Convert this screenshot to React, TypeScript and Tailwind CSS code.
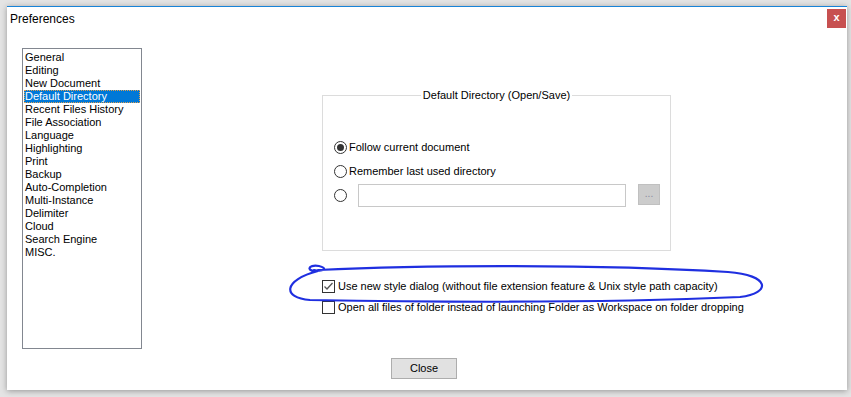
import React from 'react';

const pages = [
  'General',
  'Editing',
  'New Document',
  'Default Directory',
  'Recent Files History',
  'File Association',
  'Language',
  'Highlighting',
  'Print',
  'Backup',
  'Auto-Completion',
  'Multi-Instance',
  'Delimiter',
  'Cloud',
  'Search Engine',
  'MISC.',
];

function Radio({ checked }: { checked?: boolean }) {
  return (
    <span className="w-[13px] h-[13px] rounded-full border border-[#333] bg-white flex items-center justify-center shrink-0">
      {checked && <span className="w-[7px] h-[7px] rounded-full bg-[#333]" />}
    </span>
  );
}

function Checkbox({ checked }: { checked?: boolean }) {
  return (
    <span className="w-[13px] h-[13px] border border-[#333] bg-white flex items-center justify-center shrink-0">
      {checked && (
        <svg width="11" height="11" viewBox="0 0 11 11">
          <path d="M1.5 5.5 L4 8 L9.5 2" fill="none" stroke="#555" strokeWidth="1.3" />
        </svg>
      )}
    </span>
  );
}

export default function App() {
  return (
    <div
      className="relative w-[851px] h-[397px] overflow-hidden bg-[#e4e4e4] pl-[7px] pt-[6px] text-[11px] text-black"
      style={{ fontFamily: '"Liberation Sans", Arial, sans-serif' }}
    >
      <div className="w-[840px] h-[384px] bg-white border-t border-[#1883d7] shadow-[0_1px_6px_rgba(0,0,0,0.35)] flex flex-col">
        {/* title bar */}
        <div className="relative h-[34px] shrink-0">
          <div className="pl-[3px] pt-[5px] text-[12px] leading-[15px]">Preferences</div>
          <div className="absolute right-[1px] top-[2px] w-[19px] h-[19px] bg-[#c75050] text-white text-[11px] font-bold leading-[17px] text-center">
            x
          </div>
        </div>

        <div className="flex">
          {/* page list */}
          <div className="ml-[15px] mt-[7px] w-[120px] h-[301px] border border-[#828790] pt-[2px]">
            {pages.map((p) => (
              <div
                key={p}
                className={
                  p === 'Default Directory'
                    ? 'mx-[1px] pl-[1px] h-[13px] leading-[13px] bg-[#0078d7] text-white outline outline-dotted outline-[#e0a050] -outline-offset-1'
                    : 'mx-[1px] pl-[1px] h-[13px] leading-[13px]'
                }
              >
                {p}
              </div>
            ))}
          </div>

          {/* right pane */}
          <div className="ml-[180px] flex flex-col">
            <div className="relative mt-[54px] w-[349px] h-[156px] border border-[#dcdcdc] pl-[11px] pt-[39px]">
              <div className="absolute left-0 right-0 -top-[8px] flex justify-center">
                <span className="bg-white px-[2px] leading-[14px]">Default Directory (Open/Save)</span>
              </div>
              <div className="flex flex-col">
                <div className="h-[24px] flex items-center gap-[2px]">
                  <Radio checked />
                  <span>Follow current document</span>
                </div>
                <div className="h-[24px] flex items-center gap-[2px]">
                  <Radio />
                  <span>Remember last used directory</span>
                </div>
                <div className="h-[24px] flex items-center">
                  <Radio />
                  <span className="ml-[11px] w-[268px] h-[23px] border border-[#c8c8c8] bg-white" />
                  <span className="ml-[12px] w-[22px] h-[21px] -mt-[2px] border border-[#c0c0c0] bg-[#cccccc] text-[#8a8aa0] text-[10px] leading-[18px] text-center">
                    ...
                  </span>
                </div>
              </div>
            </div>

            <div className="mt-[29px] h-[13px] flex items-center gap-[3px] whitespace-nowrap">
              <Checkbox checked />
              <span>Use new style dialog (without file extension feature &amp; Unix style path capacity)</span>
            </div>
            <div className="mt-[8px] h-[13px] flex items-center gap-[3px] whitespace-nowrap">
              <Checkbox />
              <span>Open all files of folder instead of launching Folder as Workspace on folder dropping</span>
            </div>

            <div className="mt-[44px] ml-[69px] w-[66px] h-[21px] border border-[#adadad] bg-[#e1e1e1] flex items-center justify-center">
              Close
            </div>
          </div>
        </div>
      </div>

      {/* hand-drawn annotation */}
      <svg className="absolute left-0 top-0 pointer-events-none" width="851" height="397">
        <path
          d="M318 270 C 420 265, 600 264, 728 272 C 770 275, 772 293, 740 297 C 600 303, 420 302, 310 300 C 282 298, 283 280, 318 271 C 306 272, 307 264, 319 266 C 328 268, 324 272, 314 270"
          fill="none"
          stroke="#1f2fe0"
          strokeWidth="2.2"
          strokeLinecap="round"
        />
      </svg>
    </div>
  );
}
